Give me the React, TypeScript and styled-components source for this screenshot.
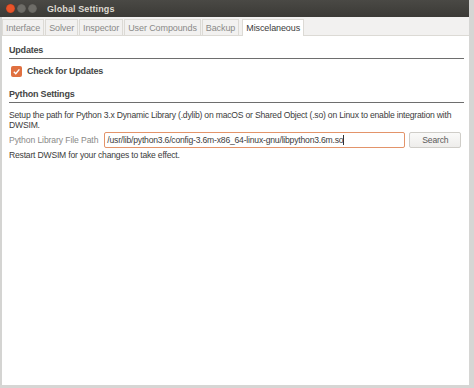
import React from 'react';
import styled, { createGlobalStyle } from 'styled-components';

const GlobalStyle = createGlobalStyle`
  html, body {
    margin: 0;
    padding: 0;
    background: #d6d6d4;
    font-family: "Liberation Sans", Arial, sans-serif;
  }
`

const Window = styled.div`
  width: 469px;
  height: 385px;
  display: flex;
  flex-direction: column;
  background: #ffffff;
  border-left: 2px solid #d4d4d2;
  box-sizing: border-box;
`

const TitleBar = styled.div`
  height: 17px;
  display: flex;
  align-items: center;
  padding-left: 6px;
  background: linear-gradient(#4a4945, #3b3a36);
  margin-left: -2px;
`

const Dot = styled.span<{ $color: string }>`
  width: 9px;
  height: 9px;
  border-radius: 50%;
  margin-right: 2px;
  background: ${p => p.$color};
  box-shadow: inset 0 0 1px rgba(0,0,0,0.5);
`

const Title = styled.span`
  margin-left: 8px;
  color: #dfdbd2;
  font-size: 9px;
  font-weight: bold;
  letter-spacing: 0.1px;
`

const TabBar = styled.div`
  height: 18px;
  display: flex;
  align-items: flex-end;
  background: #f2f1f0;
  border-bottom: 1px solid #dcdad5;
`

const Tab = styled.div<{ $active?: boolean }>`
  height: ${p => (p.$active ? '17px' : '16px')};
  display: flex;
  align-items: center;
  padding: 0 3px;
  margin-right: ${p => (p.$active ? '0' : '1px')};
  margin-left: ${p => (p.$active ? '2px' : '0')};
  font-size: 9px;
  letter-spacing: -0.1px;
  color: ${p => (p.$active ? '#3c3c3c' : '#8a8a88')};
  background: ${p => (p.$active ? '#ffffff' : '#f2f1f0')};
  border: 1px solid #dcdad5;
  border-bottom: none;
  box-sizing: border-box;
  margin-bottom: ${p => (p.$active ? '-1px' : '0')};
`

const Content = styled.div`
  flex: 1;
  padding: 9px 5px 0 7px;
  color: #3c3c3c;
  font-size: 8.6px;
  letter-spacing: -0.2px;
  line-height: 11px;
`

const SectionTitle = styled.div`
  font-weight: bold;
  font-size: 9px;
  color: #454545;
  padding-bottom: 2px;
  border-bottom: 1px solid #6e6e6e;
  margin-bottom: 7px;
`

const CheckRow = styled.label`
  display: flex;
  align-items: center;
  gap: 5px;
  height: 11px;
  font-weight: bold;
  font-size: 9px;
  color: #454545;
  margin-left: 2px;
  margin-bottom: 12px;
`

const Box = styled.span`
  width: 11px;
  height: 11px;
  border-radius: 2px;
  background: #e07040;
  display: flex;
  align-items: center;
  justify-content: center;
`

const Paragraph = styled.div`
  line-height: 10px;
`

const PathRow = styled.div`
  display: flex;
  align-items: center;
  margin: 2px 0 2px 0;
`

const Label = styled.span`
  color: #8a8a88;
  margin-right: 6px;
  letter-spacing: -0.1px;
  white-space: nowrap;
`

const PathInput = styled.div`
  width: 301px;
  height: 16px;
  flex-shrink: 0;
  box-sizing: border-box;
  border: 1px solid #e3946a;
  border-radius: 2px;
  padding: 0 2px;
  display: flex;
  align-items: center;
  color: #3c3c3c;
  white-space: nowrap;
  overflow: hidden;
`

const Caret = styled.span`
  width: 1px;
  height: 10px;
  background: #333;
`

const Button = styled.div`
  margin-left: 4px;
  width: 52px;
  height: 16px;
  flex-shrink: 0;
  box-sizing: border-box;
  border: 1px solid #cfcdc8;
  border-radius: 2px;
  background: linear-gradient(#fafaf9, #eeedeb);
  color: #5a5a5a;
  display: flex;
  align-items: center;
  justify-content: center;
`

export default function App() {
  const tabs = ['Interface', 'Solver', 'Inspector', 'User Compounds', 'Backup'];
  return (
    <>
      <GlobalStyle />
      <Window>
        <TitleBar>
          <Dot $color="#e9542a" />
          <Dot $color="#6e6d68" />
          <Dot $color="#6e6d68" />
          <Title>Global Settings</Title>
        </TitleBar>
        <TabBar>
          {tabs.map(t => (
            <Tab key={t}>{t}</Tab>
          ))}
          <Tab $active>Miscelaneous</Tab>
        </TabBar>
        <Content>
          <SectionTitle>Updates</SectionTitle>
          <CheckRow>
            <Box>
              <svg width="9" height="9" viewBox="0 0 10 10">
                <path d="M2 5.2 L4.2 7.4 L8.2 2.6" stroke="#fff" strokeWidth="1.6" fill="none" />
              </svg>
            </Box>
            Check for Updates
          </CheckRow>
          <SectionTitle>Python Settings</SectionTitle>
          <Paragraph>
            Setup the path for Python 3.x Dynamic Library (.dylib) on macOS or Shared Object (.so) on Linux to enable integration with DWSIM.
          </Paragraph>
          <PathRow>
            <Label>Python Library File Path</Label>
            <PathInput>
              /usr/lib/python3.6/config-3.6m-x86_64-linux-gnu/libpython3.6m.so
              <Caret />
            </PathInput>
            <Button>Search</Button>
          </PathRow>
          <div>Restart DWSIM for your changes to take effect.</div>
        </Content>
      </Window>
    </>
  );
}
